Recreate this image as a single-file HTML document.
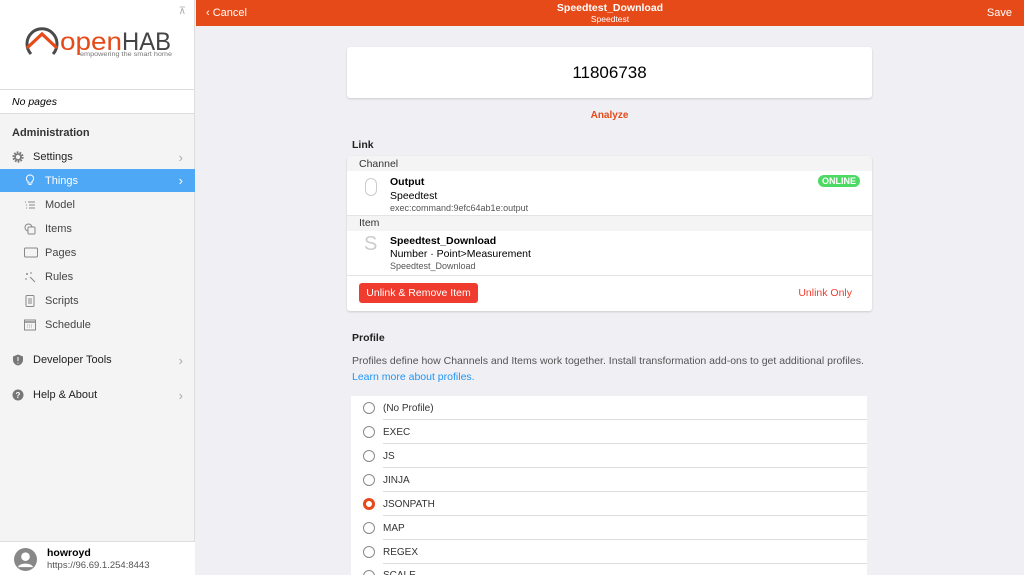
<!DOCTYPE html>
<html style="overflow:hidden"><head><meta charset="utf-8"><style>
*{box-sizing:border-box;margin:0;padding:0}
html,body{width:1024px;height:575px;overflow:hidden}
body{font-family:"Liberation Sans",sans-serif;background:#efeff4;position:relative;font-size:11px;color:#000}
.side{position:absolute;left:0;top:0;width:195px;height:575px;background:#f4f4f4;border-right:1px solid #ddd}
.logo{height:90px;background:#fff;border-bottom:1px solid #ddd;position:relative}
.np{height:24px;background:#fff;border-bottom:1px solid #ddd;padding:6px 12px;font-style:italic;font-size:10.5px}
.sec{position:absolute;left:12px;font-size:11px;color:#222}
.it{position:absolute;left:0;width:195px;height:22px;font-size:11px;color:#222;display:flex;align-items:center}
.it .ic{position:absolute;left:12px;top:5px;width:12px;height:12px}
.it span{position:absolute;left:33px}
.sub span{left:45px;color:#444}
.sub .ic{left:24px}
.chev{position:absolute;right:12px;color:#aaa;font-size:13px;font-weight:normal}
.top{position:absolute;left:196px;top:0;right:0;height:26px;background:#e64a19;color:#fff}
.card{position:absolute;background:#fff;border-radius:3px;box-shadow:0 1px 2px rgba(0,0,0,.15)}
.lbl{position:absolute;font-size:10.5px;color:#333}
.radio{position:absolute;left:363px;width:12px;height:12px;border:1px solid #888;border-radius:50%}
.rt{position:absolute;left:383px;font-size:10px;color:#333}
.rl{position:absolute;left:383px;width:484px;height:1px;background:#ddd}
</style></head><body>
<div class="side">
 <div class="logo">
  <svg style="position:absolute;left:22px;top:24px" width="155" height="38" viewBox="0 0 155 38">
   <path d="M9 30 A15 15 0 1 1 31 30" fill="none" stroke="#4a4a4a" stroke-width="3"/>
   <path d="M5 24 L20 10 L35 24" fill="none" stroke="#e64a19" stroke-width="3.2"/>
   <text x="38" y="26" font-family="Liberation Sans" font-size="25" fill="#e64a19" textLength="62" lengthAdjust="spacingAndGlyphs">open</text>
   <text x="100" y="26" font-family="Liberation Sans" font-size="25" fill="#444" textLength="49" lengthAdjust="spacingAndGlyphs">HAB</text>
   <text x="58" y="32" font-family="Liberation Sans" font-size="6.5" fill="#777" textLength="92" lengthAdjust="spacingAndGlyphs">empowering the smart home</text>
  </svg>
  <div style="position:absolute;right:8px;top:6px;color:#aaa;font-size:10px">⊼</div>
 </div>
 <div class="np">No pages</div>
 <div class="sec" style="top:127px;font-weight:bold;color:#333">Administration</div>
 <div class="it" style="top:146px"><svg class="ic" viewBox="0 0 12 12"><circle cx="6" cy="6" r="4.3" fill="none" stroke="#777" stroke-width="2.6" stroke-dasharray="1.6 1.1"/><circle cx="6" cy="6" r="3" fill="none" stroke="#777" stroke-width="1.6"/></svg><span>Settings</span><b class="chev">›</b></div>
 <div class="it sub" style="top:169px;height:23px;background:#4ea8f5;color:#fff"><svg class="ic" viewBox="0 0 12 12"><path d="M6 1a3.5 3.5 0 0 0-2 6.4V9h4V7.4A3.5 3.5 0 0 0 6 1zM4.5 10.5h3" fill="none" stroke="#fff" stroke-width="1"/></svg><span style="color:#fff">Things</span><b class="chev" style="color:#fff">›</b></div>
 <div class="it sub" style="top:194px"><svg class="ic" viewBox="0 0 12 12"><path d="M1 3h1M4 3h7M2 6h1M5 6h6M2 9h1M5 9h6" stroke="#888" stroke-width="1"/></svg><span>Model</span></div>
 <div class="it sub" style="top:218px"><svg class="ic" viewBox="0 0 12 12"><circle cx="4.5" cy="4.5" r="3.5" fill="none" stroke="#888"/><rect x="4" y="4" width="7" height="7" rx="1" fill="#f4f4f4" stroke="#888"/></svg><span>Items</span></div>
 <div class="it sub" style="top:242px"><svg class="ic" viewBox="0 0 14 12" style="width:14px"><rect x="0.5" y="1" width="13" height="9" rx="1" fill="none" stroke="#888"/></svg><span>Pages</span></div>
 <div class="it sub" style="top:266px"><svg class="ic" viewBox="0 0 12 12"><path d="M6 6l5 5M2 3h2M3 2v2M7 1v2M1 8h2" stroke="#888"/></svg><span>Rules</span></div>
 <div class="it sub" style="top:290px"><svg class="ic" viewBox="0 0 12 12"><rect x="2" y="0.5" width="8" height="11" rx="1" fill="none" stroke="#888"/><path d="M4 4h4M4 6h4M4 8h4" stroke="#888"/></svg><span>Scripts</span></div>
 <div class="it sub" style="top:314px"><svg class="ic" viewBox="0 0 12 12"><rect x="0.5" y="1" width="11" height="10" fill="none" stroke="#888"/><path d="M0.5 3h11" stroke="#888" stroke-width="1.5"/><path d="M3 6h6M3 8h6" stroke="#aaa" stroke-dasharray="1 1"/></svg><span>Schedule</span></div>
 <div class="it" style="top:349px"><svg class="ic" viewBox="0 0 12 12"><path d="M6 0.5L11 2.5V6c0 3-2.5 5-5 5.5C3.5 11 1 9 1 6V2.5z" fill="#777"/><path d="M6 3v4M6 8.5v1" stroke="#fff"/></svg><span>Developer Tools</span><b class="chev">›</b></div>
 <div class="it" style="top:384px"><svg class="ic" viewBox="0 0 12 12"><circle cx="6" cy="6" r="5.5" fill="#777"/><text x="6" y="9" font-size="8" fill="#fff" text-anchor="middle" font-family="Liberation Sans" font-weight="bold">?</text></svg><span>Help &amp; About</span><b class="chev">›</b></div>
 <div style="position:absolute;left:0;top:541px;width:195px;height:34px;background:#fff;border-top:1px solid #ddd">
  <svg style="position:absolute;left:14px;top:6px" width="23" height="23" viewBox="0 0 24 24"><circle cx="12" cy="12" r="12" fill="#888"/><circle cx="12" cy="9" r="4.5" fill="#fff"/><path d="M4 20c2-5 14-5 16 0" fill="#fff"/></svg>
  <div style="position:absolute;left:47px;top:5px;font-weight:bold;font-size:10.5px">howroyd</div>
  <div style="position:absolute;left:47px;top:18px;font-size:9.5px;color:#555">https://96.69.1.254:8443</div>
 </div>
</div>
<div class="top">
 <div style="position:absolute;left:10px;top:7px;font-size:11px">‹ Cancel</div>
 <div style="position:absolute;left:0;right:0;top:2px;text-align:center;font-weight:bold;font-size:10.5px">Speedtest_Download</div>
 <div style="position:absolute;left:0;right:0;top:14px;text-align:center;font-size:8.5px">Speedtest</div>
 <div style="position:absolute;right:12px;top:7px;font-size:11px">Save</div>
</div>
<div class="card" style="left:347px;top:47px;width:525px;height:51px"><div style="text-align:center;font-size:17px;padding-top:16px">11806738</div></div>
<div style="position:absolute;left:347px;width:525px;top:110px;text-align:center;color:#e64a19;font-size:10px;font-weight:bold">Analyze</div>
<div class="lbl" style="left:352px;top:139px;font-weight:bold;color:#222">Link</div>
<div class="card" style="left:347px;top:156px;width:525px;height:155px;background:#f4f4f4;overflow:hidden">
 <div class="lbl" style="left:12px;top:2px">Channel</div>
 <div style="position:absolute;left:0;top:15px;width:525px;height:45px;background:#fff;border-bottom:1px solid #e4e4e4">
  <div style="position:absolute;left:18px;top:7px;width:12px;height:18px;border:1px solid #ccc;border-radius:6px"></div>
  <div style="position:absolute;left:43px;top:5px;font-weight:bold;font-size:10.5px">Output</div>
  <div style="position:absolute;left:43px;top:19px;font-size:10.5px">Speedtest</div>
  <div style="position:absolute;left:43px;top:32px;font-size:9px;color:#555">exec:command:9efc64ab1e:output</div>
  <div style="position:absolute;right:12px;top:4px;background:#4cd964;color:#fff;font-size:9px;font-weight:bold;border-radius:8px;padding:1px 4px">ONLINE</div>
 </div>
 <div class="lbl" style="left:12px;top:61px">Item</div>
 <div style="position:absolute;left:0;top:75px;width:525px;height:45px;background:#fff;border-bottom:1px solid #e4e4e4">
  <div style="position:absolute;left:17px;top:2px;font-size:20px;color:#ccc">S</div>
  <div style="position:absolute;left:43px;top:4px;font-weight:bold;font-size:10.5px">Speedtest_Download</div>
  <div style="position:absolute;left:43px;top:17px;font-size:10.5px">Number · Point&gt;Measurement</div>
  <div style="position:absolute;left:43px;top:30px;font-size:9px;color:#555">Speedtest_Download</div>
 </div>
 <div style="position:absolute;left:0;top:120px;width:525px;height:35px;background:#fff">
  <div style="position:absolute;left:12px;top:7px;width:119px;height:20px;background:#f03c2e;border-radius:3px;color:#fff;font-size:10.5px;text-align:center;line-height:20px">Unlink &amp; Remove Item</div>
  <div style="position:absolute;right:20px;top:11px;color:#f03c2e;font-size:10.5px">Unlink Only</div>
 </div>
</div>
<div class="lbl" style="left:352px;top:332px;font-weight:bold;color:#222">Profile</div>
<div style="position:absolute;left:352px;top:355px;font-size:10.5px;color:#555">Profiles define how Channels and Items work together. Install transformation add-ons to get additional profiles.</div>
<div style="position:absolute;left:352px;top:371px;font-size:10.5px;color:#2196f3">Learn more about profiles.</div>
<div style="position:absolute;left:351px;top:396px;width:516px;height:179px;background:#fff"></div>
<div class="radio" style="top:402px"></div><div class="rt" style="top:403px">(No Profile)</div><div class="rl" style="top:419px"></div>
<div class="radio" style="top:426px"></div><div class="rt" style="top:427px">EXEC</div><div class="rl" style="top:443px"></div>
<div class="radio" style="top:450px"></div><div class="rt" style="top:451px">JS</div><div class="rl" style="top:467px"></div>
<div class="radio" style="top:474px"></div><div class="rt" style="top:475px">JINJA</div><div class="rl" style="top:491px"></div>
<div class="radio" style="top:498px;border:3.5px solid #e64a19"></div><div class="rt" style="top:499px">JSONPATH</div><div class="rl" style="top:515px"></div>
<div class="radio" style="top:522px"></div><div class="rt" style="top:523px">MAP</div><div class="rl" style="top:539px"></div>
<div class="radio" style="top:546px"></div><div class="rt" style="top:547px">REGEX</div><div class="rl" style="top:563px"></div>
<div class="radio" style="top:570px"></div><div class="rt" style="top:570px">SCALE</div>
</body></html>
